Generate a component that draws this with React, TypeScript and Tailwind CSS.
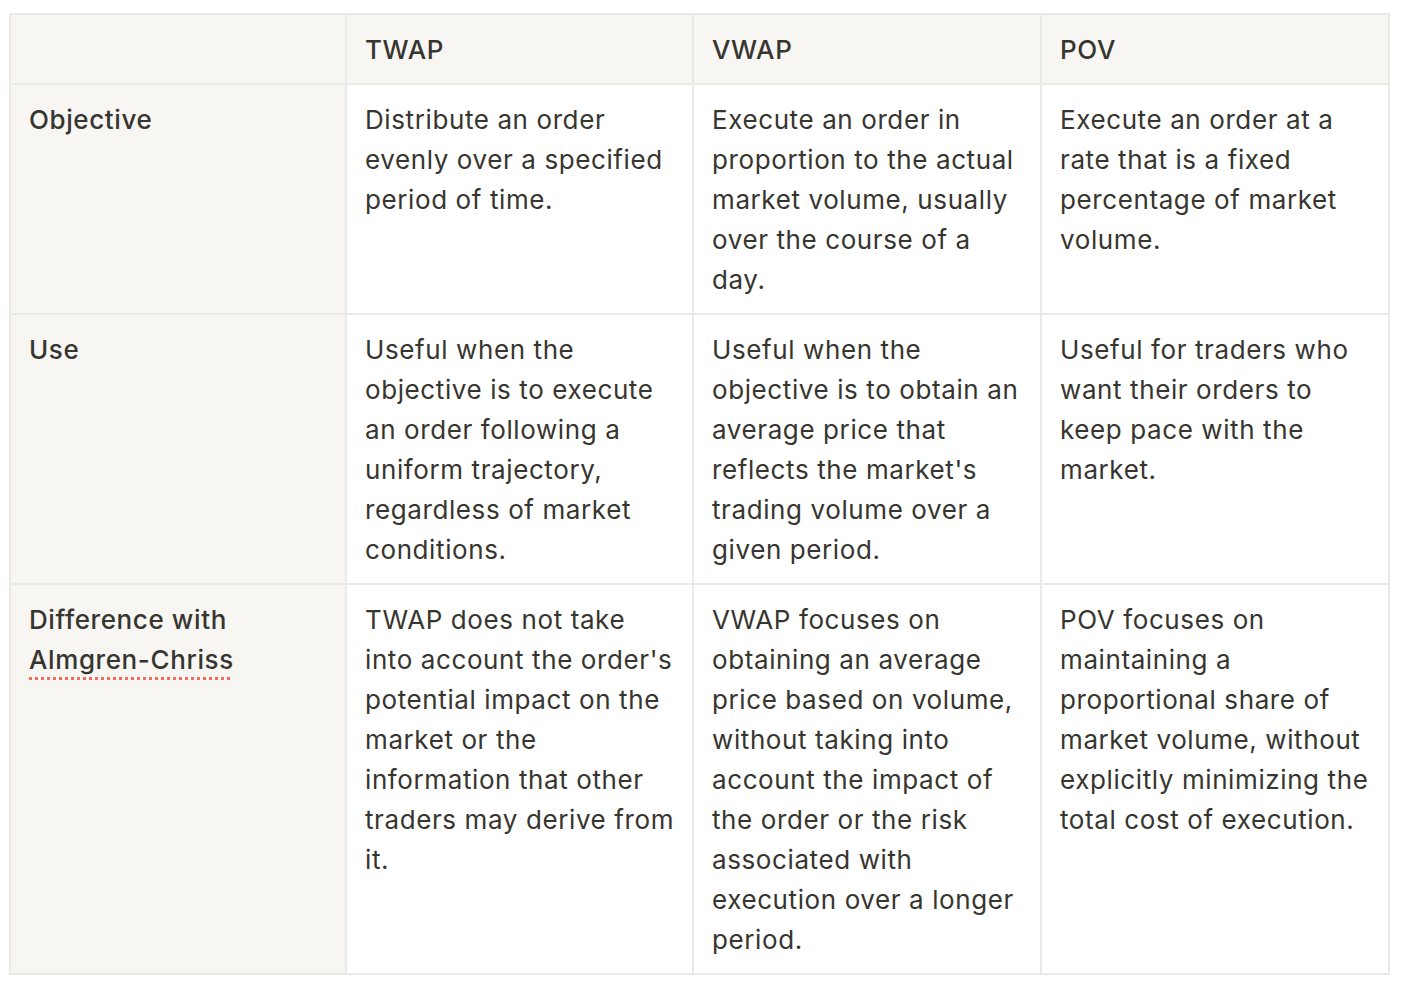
import React from 'react';

// lines are kept as in the source so the wrapping matches
const rows: { label: string[]; cells: string[][] }[] = [
  {
    label: ['Objective'],
    cells: [
      ['Distribute an order', 'evenly over a specified', 'period of time.'],
      ['Execute an order in', 'proportion to the actual', 'market volume, usually', 'over the course of a', 'day.'],
      ['Execute an order at a', 'rate that is a fixed', 'percentage of market', 'volume.'],
    ],
  },
  {
    label: ['Use'],
    cells: [
      ['Useful when the', 'objective is to execute', 'an order following a', 'uniform trajectory,', 'regardless of market', 'conditions.'],
      ['Useful when the', 'objective is to obtain an', 'average price that', "reflects the market's", 'trading volume over a', 'given period.'],
      ['Useful for traders who', 'want their orders to', 'keep pace with the', 'market.'],
    ],
  },
  {
    label: ['Difference with', 'Almgren-Chriss'],
    cells: [
      ['TWAP does not take', "into account the order's", 'potential impact on the', 'market or the', 'information that other', 'traders may derive from', 'it.'],
      ['VWAP focuses on', 'obtaining an average', 'price based on volume,', 'without taking into', 'account the impact of', 'the order or the risk', 'associated with', 'execution over a longer', 'period.'],
      ['POV focuses on', 'maintaining a', 'proportional share of', 'market volume, without', 'explicitly minimizing the', 'total cost of execution.'],
    ],
  },
];

const cell = 'border-2 border-[#e9e9e7] px-[18px] pt-[15px] pb-[13px] align-top text-left';

const Lines = ({ lines }: { lines: string[] }) => (
  <>
    {lines.map((l, i) => (
      <span key={i} className="block whitespace-nowrap">
        {l}
      </span>
    ))}
  </>
);

export default function App() {
  return (
    <div className="bg-white min-h-screen pt-[13px] pl-[9px] font-['Inter',sans-serif] text-[#37352f] text-[26px] leading-[40px] tracking-[0.6px]">
      <table className="table-fixed border-collapse w-[1379px]">
        <colgroup>
          <col className="w-[336px]" />
          <col className="w-[347px]" />
          <col className="w-[348px]" />
          <col className="w-[348px]" />
        </colgroup>
        <thead>
          <tr className="bg-[#f7f6f3]">
            <th className={cell}></th>
            <th className={`${cell} font-medium`}>TWAP</th>
            <th className={`${cell} font-medium`}>VWAP</th>
            <th className={`${cell} font-medium`}>POV</th>
          </tr>
        </thead>
        <tbody>
          {rows.map((r) => (
            <tr key={r.label[0]}>
              <td className={`${cell} bg-[#f7f6f3] font-medium`}>
                {r.label.map((l, i) => (
                  <span key={i} className="block whitespace-nowrap">
                    {l === 'Almgren-Chriss' ? (
                      <span className="underline decoration-dotted decoration-[#f26b5b] decoration-[3px] underline-offset-[8px]">
                        {l}
                      </span>
                    ) : (
                      l
                    )}
                  </span>
                ))}
              </td>
              {r.cells.map((c, i) => (
                <td key={i} className={cell}>
                  <Lines lines={c} />
                </td>
              ))}
            </tr>
          ))}
        </tbody>
      </table>
    </div>
  );
}
